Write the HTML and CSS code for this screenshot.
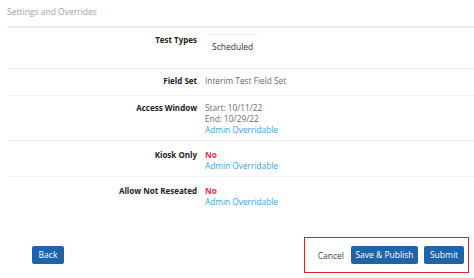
FILE: index.html
```html
<!DOCTYPE html>
<html>
<head>
<meta charset="utf-8">
<link rel="stylesheet" href="styles.css">
</head>
<body>
<div class="page">
  <div class="title">Settings and Overrides</div>
  <div class="rows">
    <div class="row r1">
      <div class="label">Test Types</div>
      <div class="value"><div class="chip">Scheduled</div></div>
    </div>
    <div class="row r2">
      <div class="label">Field Set</div>
      <div class="value">Interim Test Field Set</div>
    </div>
    <div class="row r3">
      <div class="label">Access Window</div>
      <div class="value">
        <div>Start: 10/11/22</div>
        <div>End: 10/29/22</div>
        <div class="link">Admin Overridable</div>
      </div>
    </div>
    <div class="row r4">
      <div class="label">Kiosk Only</div>
      <div class="value">
        <div class="no">No</div>
        <div class="link">Admin Overridable</div>
      </div>
    </div>
    <div class="row r5">
      <div class="label">Allow Not Reseated</div>
      <div class="value">
        <div class="no">No</div>
        <div class="link">Admin Overridable</div>
      </div>
    </div>
  </div>
  <div class="footer">
    <button class="btn back">Back</button>
    <div class="actions">
      <span class="cancel">Cancel</span>
      <button class="btn">Save &amp; Publish</button>
      <button class="btn">Submit</button>
    </div>
  </div>
</div>
</body>
</html>
```
FILE: styles.css
```css
* { box-sizing: border-box; }
html, body { margin: 0; padding: 0; background: #fff; }
body {
  width: 474px;
  height: 278px;
  overflow: hidden;
  font-family: "Open Sans", "Liberation Sans", sans-serif;
  font-size: 8px;
  color: #555;
}
.page { padding: 0 0 0 7px; }
.title {
  color: #a3a3a3;
  font-size: 8.5px;
  line-height: 10px;
  padding-top: 7px;
  height: 28px;
  border-bottom: 2px solid #ececec;
}
.rows { padding-left: 1px; }
.row {
  display: flex;
  gap: 8px;
  border-bottom: 1px solid #f0f0f0;
  line-height: 11px;
}
.label {
  width: 189px;
  text-align: right;
  font-weight: 700;
  color: #222;
  flex: none;
}
.value { color: #6a6a6a; font-size: 8.3px; }
.r1 { height: 41px; padding-top: 6px; }
.chip {
  border-top: 1px solid #f0f0f0;
  width: 51px;
  margin-left: 1px;
  padding: 6px 0 0 6px;
  color: #333;
  font-size: 8.5px;
}
.r2 { height: 27px; padding-top: 6px; }
.r3 { height: 45px; padding-top: 6px; }
.r4 { height: 36px; padding-top: 8px; }
.r5 { height: 34px; padding-top: 8px; border-bottom: none; }
.link { color: #3ba3e0; }
.no { color: #e0314a; font-weight: 700; }
.footer {
  display: flex;
  justify-content: space-between;
  align-items: center;
  padding: 0 5px 0 25px;
  margin-top: 26px;
}
.btn {
  font-family: inherit;
  font-size: 8.5px;
  background: #1e64a6;
  color: #fff;
  border: none;
  border-radius: 2px;
  height: 18px;
  padding: 0 7px;
  line-height: 18px;
}
.back { width: 32px; padding: 0; }
.actions {
  display: flex;
  align-items: center;
  gap: 6px;
  border: 1.5px solid #e02028;
  height: 36px;
  padding: 0 4px 0 13px;
}
.cancel { color: #444; font-size: 8.5px; margin-right: 1px; }
.actions .btn:nth-of-type(1) { width: 67px; padding: 0; }
.actions .btn:nth-of-type(2) { width: 40px; padding: 0; }
```
